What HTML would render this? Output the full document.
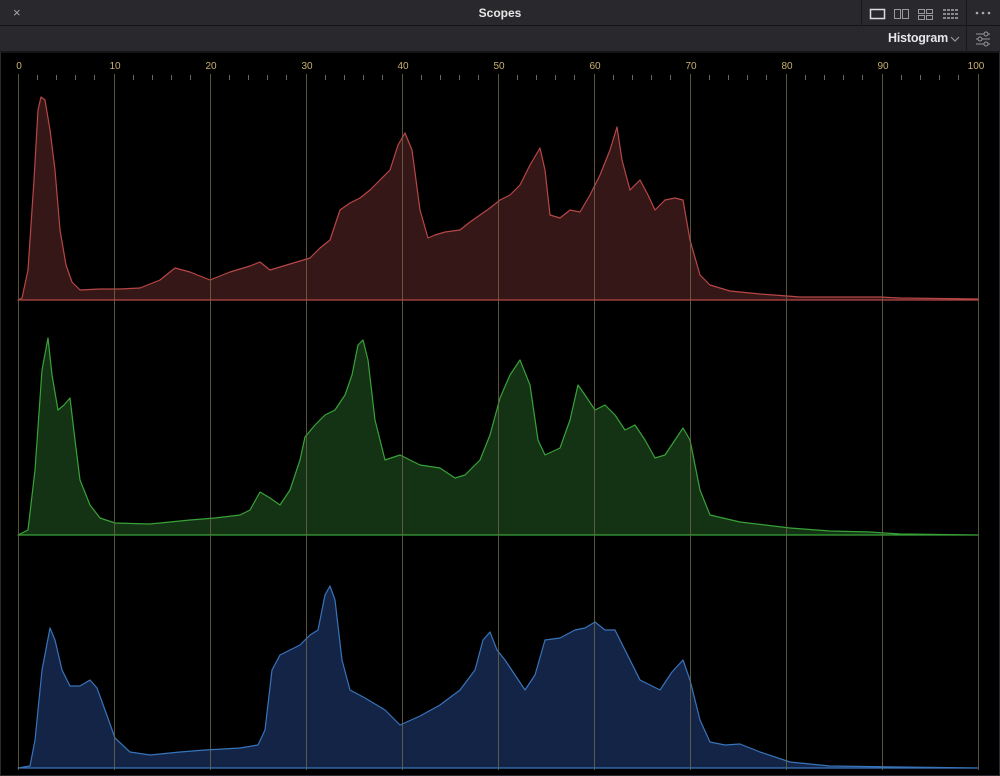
<!DOCTYPE html>
<html><head><style>
body{margin:0;width:1000px;height:776px;background:#000;overflow:hidden;font-family:"Liberation Sans",sans-serif;}
.bar{position:absolute;left:0;width:1000px;background:#28282d;}
</style></head><body>
<div class="bar" style="top:0;height:25px;border-bottom:1px solid #151517;"></div>
<div class="bar" style="top:26px;height:25px;border-bottom:1px solid #151517;"></div>
<div style="position:absolute;left:13px;top:5px;color:#aaa;font-size:13px;">×</div>
<div style="position:absolute;left:0;width:1000px;top:6px;text-align:center;color:#e6e6e6;font-size:12px;font-weight:bold;">Scopes</div>
<div style="position:absolute;left:861px;top:0;width:1px;height:25px;background:#18181a;"></div>
<div style="position:absolute;left:966px;top:0;width:1px;height:52px;background:#18181a;"></div>
<svg style="position:absolute;left:0;top:0" width="1000" height="52">
<rect x="870.5" y="9.5" width="14" height="9" fill="none" stroke="#ddd" stroke-width="1.5"/>
<rect x="894.5" y="9.5" width="6" height="9" fill="none" stroke="#999"/><rect x="902.5" y="9.5" width="6" height="9" fill="none" stroke="#999"/>
<rect x="918.5" y="9.5" width="6" height="4" fill="none" stroke="#999"/><rect x="926.5" y="9.5" width="6" height="4" fill="none" stroke="#999"/>
<rect x="918.5" y="15.5" width="6" height="4" fill="none" stroke="#999"/><rect x="926.5" y="15.5" width="6" height="4" fill="none" stroke="#999"/>
<g fill="#888"><rect x="943" y="9" width="3" height="2"/><rect x="947" y="9" width="3" height="2"/><rect x="951" y="9" width="3" height="2"/><rect x="955" y="9" width="3" height="2"/>
<rect x="943" y="13" width="3" height="2"/><rect x="947" y="13" width="3" height="2"/><rect x="951" y="13" width="3" height="2"/><rect x="955" y="13" width="3" height="2"/>
<rect x="943" y="17" width="3" height="2"/><rect x="947" y="17" width="3" height="2"/><rect x="951" y="17" width="3" height="2"/><rect x="955" y="17" width="3" height="2"/></g>
<g fill="#aaa"><circle cx="977" cy="13" r="1.3"/><circle cx="983" cy="13" r="1.3"/><circle cx="989" cy="13" r="1.3"/></g>
<path d="M951 37l4 4 4-4" fill="none" stroke="#999" stroke-width="1.2"/>
<g stroke="#999" fill="#28282d" stroke-width="1"><line x1="976" y1="34" x2="990" y2="34"/><line x1="976" y1="39" x2="990" y2="39"/><line x1="976" y1="44" x2="990" y2="44"/>
<circle cx="986" cy="34" r="2"/><circle cx="980" cy="39" r="2"/><circle cx="986" cy="44" r="2"/></g>
</svg>
<div style="position:absolute;left:888px;top:31px;color:#e6e6e6;font-size:12.5px;font-weight:bold;letter-spacing:-0.2px;">Histogram</div>
<svg style="position:absolute;left:0;top:52px" width="1000" height="724" viewBox="0 52 1000 724">
<rect x="0" y="52" width="1000" height="724" fill="#000"/>
<rect x="0.5" y="52" width="999" height="723.5" fill="none" stroke="#2a2a2e"/>
<polygon fill="#361717" stroke="#b84646" stroke-width="1.2" stroke-linejoin="round" points="18,300 22,298 28,270 34,180 38,110 41,97 45,100 50,130 55,170 60,230 66,265 72,282 80,290 100,289 120,289 140,288 160,280 175,268 190,272 210,280 230,272 250,266 260,262 270,270 290,264 310,258 320,248 330,240 340,210 350,203 360,198 370,190 380,180 390,170 398,145 405,133 412,150 420,210 428,238 435,235 445,232 460,230 470,222 480,215 490,208 500,200 510,195 520,185 530,165 540,148 545,170 550,215 560,218 570,210 580,212 590,195 600,175 610,150 617,127 622,160 630,190 640,180 648,195 655,210 665,200 675,198 683,200 690,240 700,275 710,285 730,291 760,294 800,297 840,297 880,297 900,298 978,299 978,300"/>
<polygon fill="#143214" stroke="#38a238" stroke-width="1.2" stroke-linejoin="round" points="18,535 28,530 35,470 42,370 48,338 52,375 58,410 64,405 70,398 75,440 80,480 90,505 100,518 115,523 150,524 190,520 215,518 240,515 250,510 260,492 270,498 280,505 290,490 300,460 305,437 315,425 325,415 335,410 345,395 352,375 358,345 363,340 368,360 375,420 385,460 400,455 420,465 440,468 455,478 465,475 480,460 490,435 500,398 510,375 520,360 530,385 538,440 545,455 560,448 570,420 578,385 585,395 595,410 605,405 615,415 625,430 635,425 645,440 655,458 665,455 675,440 683,428 690,440 700,490 710,515 740,522 790,528 830,531 870,532 900,534 978,535"/>
<polygon fill="#132447" stroke="#3874ba" stroke-width="1.2" stroke-linejoin="round" points="18,768 30,766 35,740 42,670 50,628 55,640 62,670 70,686 80,686 90,680 97,688 105,710 115,738 130,752 150,755 180,752 205,750 240,748 258,745 265,730 272,670 280,655 290,650 300,645 310,635 318,630 325,595 330,586 335,600 342,660 350,690 365,698 385,710 400,725 420,716 440,705 460,690 475,670 483,640 490,632 497,650 505,660 515,675 525,690 535,675 545,640 560,638 575,630 585,628 595,622 605,630 615,630 625,650 640,680 660,690 672,672 683,660 690,680 700,720 710,742 725,745 740,744 760,752 790,762 830,766 900,767 978,768"/>
<g stroke="#706848" stroke-width="1" opacity="0.8">
<line x1="18.5" y1="74" x2="18.5" y2="770"/><line x1="114.5" y1="74" x2="114.5" y2="770"/><line x1="210.5" y1="74" x2="210.5" y2="770"/><line x1="306.5" y1="74" x2="306.5" y2="770"/><line x1="402.5" y1="74" x2="402.5" y2="770"/><line x1="498.5" y1="74" x2="498.5" y2="770"/><line x1="594.5" y1="74" x2="594.5" y2="770"/><line x1="690.5" y1="74" x2="690.5" y2="770"/><line x1="786.5" y1="74" x2="786.5" y2="770"/><line x1="882.5" y1="74" x2="882.5" y2="770"/><line x1="978.5" y1="74" x2="978.5" y2="770"/>
</g>
<g fill="#c8b070" font-size="10" font-family="Liberation Sans" text-anchor="middle">
<text x="19" y="69">0</text><text x="115" y="69">10</text><text x="211" y="69">20</text><text x="307" y="69">30</text><text x="403" y="69">40</text><text x="499" y="69">50</text><text x="595" y="69">60</text><text x="691" y="69">70</text><text x="787" y="69">80</text><text x="883" y="69">90</text><text x="976" y="69">100</text>
</g>
<path stroke="#666" d="M37.5 75v5M56.5 75v5M75.5 75v5M94.5 75v5M133.5 75v5M152.5 75v5M171.5 75v5M190.5 75v5M229.5 75v5M248.5 75v5M267.5 75v5M286.5 75v5M325.5 75v5M344.5 75v5M363.5 75v5M382.5 75v5M421.5 75v5M440.5 75v5M459.5 75v5M478.5 75v5M517.5 75v5M536.5 75v5M555.5 75v5M574.5 75v5M613.5 75v5M632.5 75v5M651.5 75v5M670.5 75v5M709.5 75v5M728.5 75v5M747.5 75v5M766.5 75v5M805.5 75v5M824.5 75v5M843.5 75v5M862.5 75v5M901.5 75v5M920.5 75v5M939.5 75v5M958.5 75v5"/>
</svg>
</body></html>
